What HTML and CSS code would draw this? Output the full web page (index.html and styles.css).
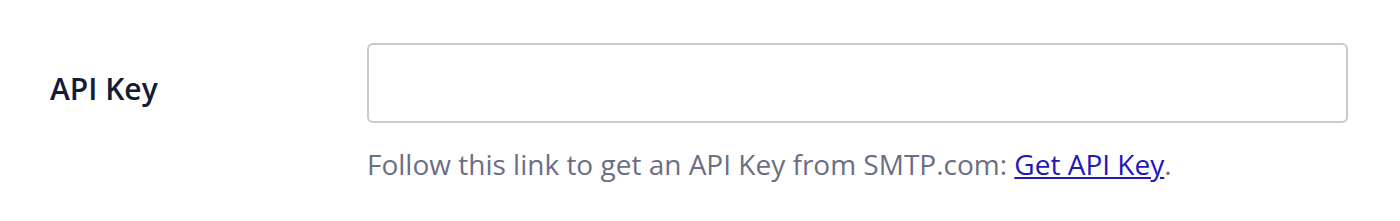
FILE: index.html
```html
<!DOCTYPE html>
<html>
<head>
<meta charset="utf-8">
<link rel="stylesheet" href="styles.css">
</head>
<body>
<div class="row">
  <div class="label-col"><label class="label" for="apikey">API Key</label></div>
  <div class="field-col">
    <input class="input" id="apikey" type="text">
    <p class="desc">Follow this link to get an API Key from SMTP.com: <a href="#" class="link">Get API Key</a>.</p>
  </div>
</div>
</body>
</html>
```

FILE: styles.css
```css
html, body {
  margin: 0;
  padding: 0;
  background: #ffffff;
}
body {
  font-family: "Open Sans", "Noto Sans", "Liberation Sans", sans-serif;
}
.row {
  display: flex;
  padding: 43px 0 0 50px;
}
.label-col {
  width: 317px;
  flex: none;
  padding-top: 27px;
}
.label {
  font-size: 30px;
  font-weight: 600;
  color: #141b38;
  line-height: 38px;
}
.field-col {
  width: 981px;
}
.input {
  display: block;
  box-sizing: border-box;
  width: 981px;
  height: 80px;
  border: 2px solid #c9cacf;
  border-radius: 6px;
  background: #fff;
  margin: 0;
}
.desc {
  margin: 22px 0 0 0;
  font-size: 28px;
  line-height: 38px;
  color: #6b6e85;
}
.link {
  color: #2218b8;
  text-decoration: underline;
}
```
